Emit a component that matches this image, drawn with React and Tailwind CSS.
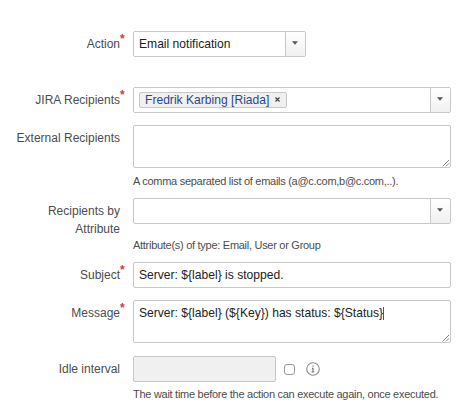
import React from "react";

const field = "box-border rounded-[2px] border border-[#c8c8c8] bg-white";

function Row({ label, required, className = "", children }) {
  return (
    <div className={`flex items-start ${className}`}>
      <div className="relative w-[120px] shrink-0 pt-[4px] text-right text-[12px] leading-[18px] text-[#4c4c4c]">
        {label}
        {required && (
          <span className="absolute top-0 left-[120px] text-[12px] leading-[16px] font-bold text-[#cc3d3d]">*</span>
        )}
      </div>
      <div className="ml-[13px] flex flex-col">{children}</div>
    </div>
  );
}

function Combo({ className, children }) {
  return (
    <div className={`flex h-[26px] overflow-hidden ${field} ${className}`}>
      <div className="flex flex-1 items-center pl-[5px]">{children}</div>
      <div className="flex w-[20px] items-center justify-center border-l border-[#c8c8c8] bg-linear-to-b from-white to-[#f0f0f0]">
        <svg width="6" height="4" viewBox="0 0 6 4" className="mb-[2px] mr-[1px]">
          <path d="M0 0.3H6L3 3.7Z" fill="#555" />
        </svg>
      </div>
    </div>
  );
}

function TextArea({ children }) {
  return (
    <div className={`relative h-[43px] w-[318px] pt-[4px] pl-[5px] leading-[17px] ${field}`}>
      {children}
      <svg width="8" height="8" viewBox="0 0 8 8" className="absolute right-0 bottom-0">
        <path d="M0.7 7.3L7 1M4 7.3L7 4.3" stroke="#777" strokeWidth="0.9" fill="none" />
      </svg>
    </div>
  );
}

function Hint({ className = "", children }) {
  return (
    <div className={`text-[11px] leading-[14px] tracking-[-0.28px] whitespace-nowrap text-[#4c4c4c] ${className}`}>
      {children}
    </div>
  );
}

export default function App() {
  return (
    <div className="h-[418px] w-[474px] overflow-hidden bg-white pt-[31px] font-['Liberation_Sans',Arial,sans-serif] text-[12.1px] text-[#222]">
      <Row label="Action" required className="h-[56px]">
        <Combo className="w-[173px]">Email notification</Combo>
      </Row>
      <Row label="JIRA Recipients" required className="h-[38px]">
        <Combo className="w-[318px]">
          <span className="flex h-[16px] items-center rounded-[2px] border border-[#c8c8c8] bg-[#f0f0f0] pr-[6px] pl-[5px] whitespace-nowrap text-[#2b478b]">
            Fredrik Karbing [Riada]
            <svg width="5" height="5" viewBox="0 0 6 6" className="mb-[2px] ml-[6px]">
              <path d="M0.6 0.6L5.4 5.4M5.4 0.6L0.6 5.4" stroke="#444" strokeWidth="1.5" />
            </svg>
          </span>
        </Combo>
      </Row>
      <Row label="External Recipients" className="h-[73px]">
        <TextArea />
        <Hint className="mt-[6px]">A comma separated list of emails (a@c.com,b@c.com,..).</Hint>
      </Row>
      <Row label={<>Recipients by<br />Attribute</>} className="h-[64px]">
        <Combo className="w-[318px]" />
        <Hint className="mt-[14px]">Attribute(s) of type: Email, User or Group</Hint>
      </Row>
      <Row label="Subject" required className="h-[38px]">
        <div className={`flex h-[26px] w-[318px] items-center pl-[5px] ${field}`}>Server: ${"{label}"} is stopped.</div>
      </Row>
      <Row label="Message" required className="h-[56px]">
        <TextArea>
          <span>Server: ${"{label}"} (${"{Key}"}) has status: ${"{Status}"}</span>
          <span className="inline-block h-[13px] w-px bg-[#555] align-middle" />
        </TextArea>
      </Row>
      <Row label="Idle interval">
        <div className="flex items-center">
          <div className="h-[26px] w-[143px] rounded-[2px] border border-[#c8c8c8] bg-[#f0f0f0]" />
          <div className="ml-[8px] h-[11px] w-[11px] rounded-[3px] border border-[#999] bg-white" />
          <svg width="14" height="14" viewBox="0 0 14 14" className="ml-[11px]">
            <circle cx="7" cy="7" r="6.3" fill="none" stroke="#8c8c8c" strokeWidth="1.1" />
            <path d="M7 3.4V4.8M5.9 6.3H7V10M5.7 10H8.3" stroke="#777" strokeWidth="1.2" fill="none" />
          </svg>
        </div>
        <Hint className="mt-[5px]">The wait time before the action can execute again, once executed.</Hint>
      </Row>
    </div>
  );
}
